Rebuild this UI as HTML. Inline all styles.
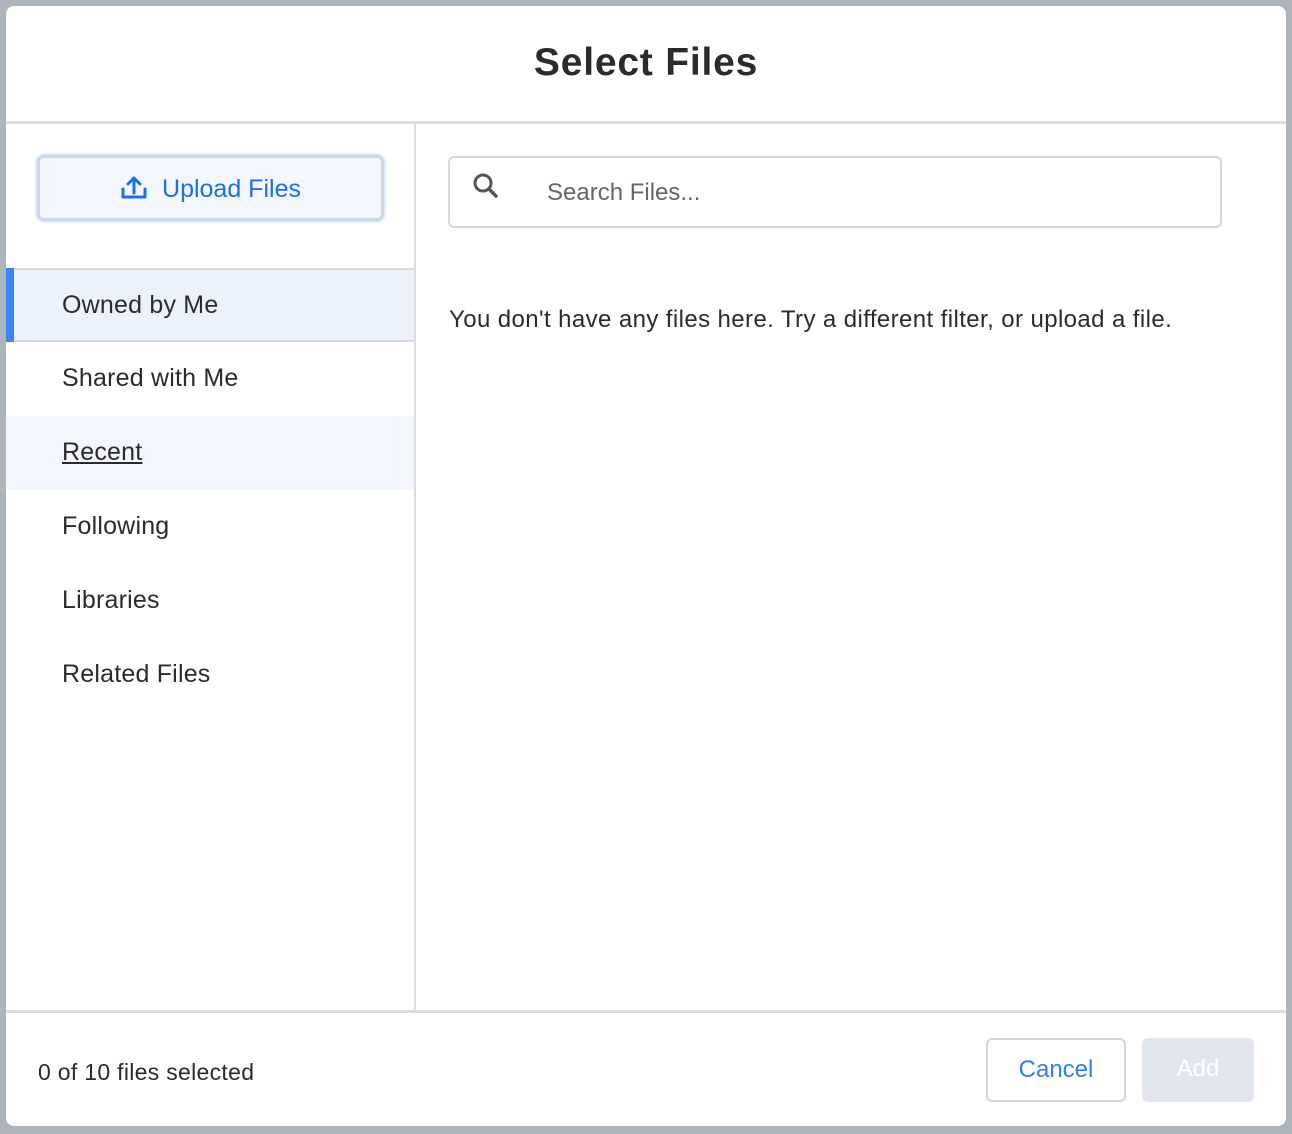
<!DOCTYPE html>
<html><head><style>
*{box-sizing:border-box;margin:0;padding:0}
body{width:1292px;height:1134px;background:#aeb4bb;font-family:"Liberation Sans",sans-serif;position:relative;overflow:hidden}
.m{position:absolute;left:6px;top:6px;width:1280px;height:1120px;background:#fff;border-radius:8px;overflow:hidden}
.hd{height:118px;border-bottom:3px solid #dcdcdc;text-align:center;font-size:39px;font-weight:bold;color:#2b2b2b;line-height:114px;letter-spacing:0.8px}
.lp{position:absolute;left:0;top:118px;width:410px;height:886px;border-right:2px solid #dcdcdc}
.up{position:absolute;left:32px;top:32px;width:345px;height:64px;border:2px solid #cfd6e4;border-radius:6px;background:#f4f8fe;box-shadow:0 0 3px 1px #9cc0f5;color:#1b6fe8;font-size:25px;line-height:62px;text-align:center}
.it{position:absolute;left:0;width:408px;height:74px;font-size:25px;color:#2b2b2b;padding-left:56px;line-height:73px;letter-spacing:0.2px}
.rp{position:absolute;left:410px;top:118px;width:870px;height:886px}
.sr{position:absolute;left:32px;top:32px;width:774px;height:72px;border:2px solid #d8d8d8;border-radius:6px;font-size:24px;color:#666;line-height:70px;padding-left:97px}
.ft{position:absolute;left:0;top:1004px;width:1280px;height:116px;border-top:3px solid #dcdcdc}
</style></head><body>
<div class="m">
<div class="hd">Select Files</div>
<div class="lp">
<div class="up"><svg width="28" height="28" viewBox="0 0 28 28" style="vertical-align:-4px;margin-right:14px"><path d="M14 20V5M8 11l6-6 6 6M3 16v8h22v-8" fill="none" stroke="#1b6fe8" stroke-width="3" stroke-linecap="round" stroke-linejoin="round"/></svg>Upload Files</div>
<div class="it" style="top:144px;background:#ebf2fc;border-top:2px solid #d8d8d8;border-bottom:2px solid #d8d8d8;line-height:70px"><div style="position:absolute;left:0;top:-2px;width:8px;height:74px;background:#3c86f0"></div>Owned by Me</div>
<div class="it" style="top:218px">Shared with Me</div>
<div class="it" style="top:292px;background:#f3f7fd"><u>Recent</u></div>
<div class="it" style="top:366px">Following</div>
<div class="it" style="top:440px">Libraries</div>
<div class="it" style="top:514px">Related Files</div>
</div>
<div class="rp">
<div class="sr"><svg width="28" height="28" viewBox="0 0 28 28" style="position:absolute;left:22px;top:14px"><circle cx="11" cy="11" r="8" fill="none" stroke="#555" stroke-width="3"/><path d="M17 17l7 7" stroke="#555" stroke-width="3.5" stroke-linecap="round"/></svg>Search Files...</div>
<div style="position:absolute;left:33px;top:182px;font-size:24px;color:#2b2b2b;letter-spacing:0.4px">You don't have any files here. Try a different filter, or upload a file.</div>
</div>
<div class="ft">
<div style="position:absolute;left:32px;top:46px;font-size:23px;color:#2b2b2b;letter-spacing:0.3px">0 of 10 files selected</div>
<div style="position:absolute;left:980px;top:25px;width:140px;height:64px;border:2px solid #d5d5d5;border-radius:6px;color:#2f7ff0;font-size:24px;text-align:center;line-height:60px">Cancel</div>
<div style="position:absolute;left:1136px;top:25px;width:112px;height:64px;background:#e1e5ee;border-radius:6px;color:#fff;font-size:24px;text-align:center;line-height:62px">Add</div>
</div>
</div>
</body></html>
